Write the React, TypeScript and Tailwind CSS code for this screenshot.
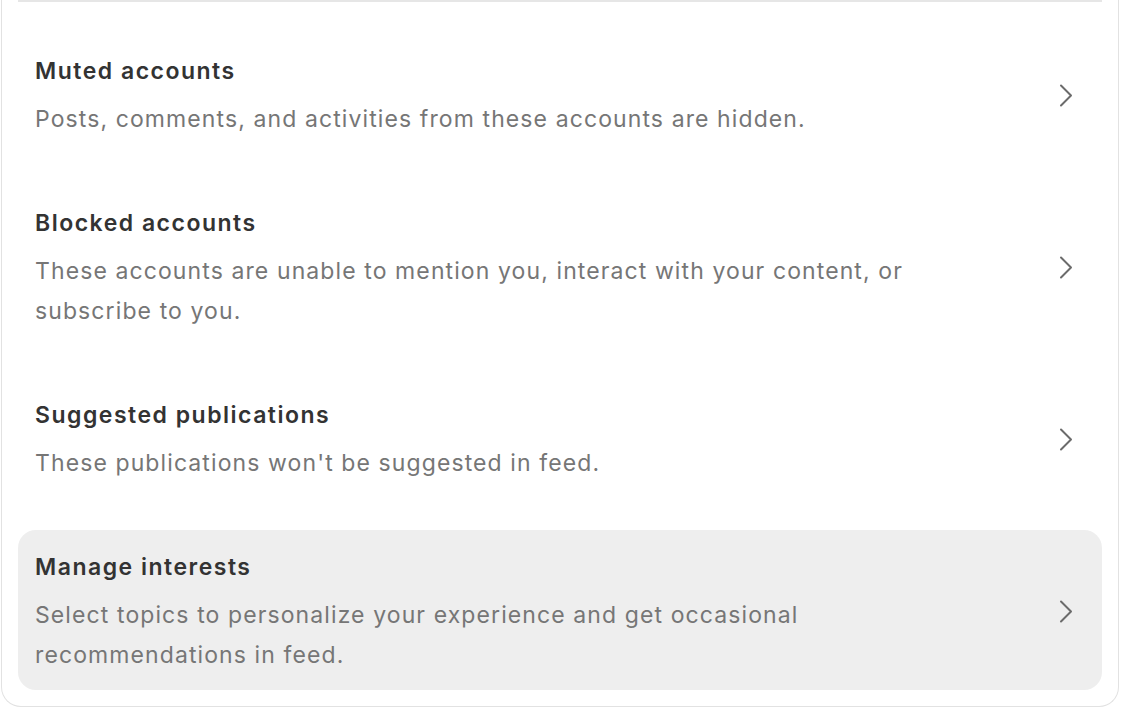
import React from 'react';

type Row = {
  title: string;
  description: string;
  active?: boolean;
};

const rows: Row[] = [
  {
    title: 'Muted accounts',
    description: 'Posts, comments, and activities from these accounts are hidden.',
  },
  {
    title: 'Blocked accounts',
    description:
      'These accounts are unable to mention you, interact with your content, or subscribe to you.',
  },
  {
    title: 'Suggested publications',
    description: "These publications won't be suggested in feed.",
  },
  {
    title: 'Manage interests',
    description:
      'Select topics to personalize your experience and get occasional recommendations in feed.',
    active: true,
  },
];

function Chevron() {
  return (
    <svg width="14" height="24" viewBox="0 0 14 24" fill="none" aria-hidden="true">
      <path
        d="M2 1.5 L12 11.5 L2 21.5"
        stroke="#6b6b6b"
        strokeWidth="2"
        strokeLinecap="round"
        strokeLinejoin="round"
      />
    </svg>
  );
}

export default function App() {
  return (
    <div className="min-h-[712px] bg-white pl-[1px] font-['Inter','Liberation_Sans',sans-serif]">
      <div className="w-[1118px] rounded-b-[20px] border-x border-b border-[#e2e2e2] px-4 pb-4">
        <div className="h-[2px] bg-[#e6e6e6]" />
        <ul className="mt-8 flex flex-col gap-8">
          {rows.map((row) => (
            <li
              key={row.title}
              className={
                'flex items-center rounded-[18px] pl-[17px] pr-[29px] pt-[18px] pb-[15px] ' +
                (row.active ? 'bg-[#eeeeee]' : '')
              }
            >
              <div className="flex-1">
                <div className="text-[23px] leading-[38px] font-semibold tracking-[1.5px] text-[#333333]">
                  {row.title}
                </div>
                <p className="mt-[9px] max-w-[905px] text-[23px] leading-[40px] tracking-[1.1px] text-[#767676]">
                  {row.description}
                </p>
              </div>
              <Chevron />
            </li>
          ))}
        </ul>
      </div>
    </div>
  );
}
